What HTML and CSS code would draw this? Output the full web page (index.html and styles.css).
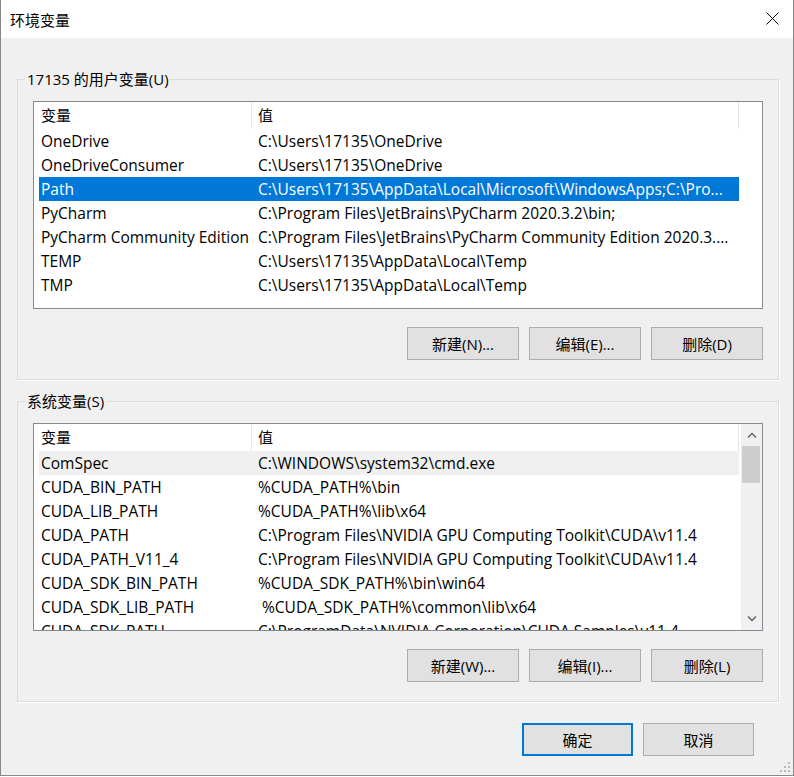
FILE: index.html
```html
<!DOCTYPE html>
<html lang="zh-CN">
<head>
    <meta charset="UTF-8">
    <title>环境变量</title>
    <link rel="stylesheet" href="styles.css">
</head>
<body>
    <div class="window">
        <div class="titlebar">
            <span class="title">环境变量</span>
            <svg class="close" width="13" height="13" viewBox="0 0 13 13">
                <path d="M0.5 0.5 L12.5 12.5 M12.5 0.5 L0.5 12.5" stroke="#000" stroke-width="1" fill="none"/>
            </svg>
        </div>

        <div class="content">
            <fieldset class="group">
                <legend>17135 的用户变量(U)</legend>
                <div class="list">
                    <div class="list-main">
                        <div class="list-head">
                            <div class="head-name">变量</div>
                            <div class="head-value">值</div>
                        </div>
                        <div class="row"><div class="cell name">OneDrive</div><div class="cell value">C:\Users\17135\OneDrive</div></div>
                        <div class="row"><div class="cell name">OneDriveConsumer</div><div class="cell value">C:\Users\17135\OneDrive</div></div>
                        <div class="row selected"><div class="cell name">Path</div><div class="cell value">C:\Users\17135\AppData\Local\Microsoft\WindowsApps;C:\Pro...</div></div>
                        <div class="row"><div class="cell name">PyCharm</div><div class="cell value">C:\Program Files\JetBrains\PyCharm 2020.3.2\bin;</div></div>
                        <div class="row"><div class="cell name">PyCharm Community Edition</div><div class="cell value">C:\Program Files\JetBrains\PyCharm Community Edition 2020.3....</div></div>
                        <div class="row"><div class="cell name">TEMP</div><div class="cell value">C:\Users\17135\AppData\Local\Temp</div></div>
                        <div class="row"><div class="cell name">TMP</div><div class="cell value">C:\Users\17135\AppData\Local\Temp</div></div>
                    </div>
                </div>
                <div class="buttons">
                    <button>新建(N)...</button>
                    <button>编辑(E)...</button>
                    <button>删除(D)</button>
                </div>
            </fieldset>

            <fieldset class="group second">
                <legend>系统变量(S)</legend>
                <div class="list">
                    <div class="list-main">
                        <div class="list-head">
                            <div class="head-name">变量</div>
                            <div class="head-value">值</div>
                        </div>
                        <div class="row hover"><div class="cell name">ComSpec</div><div class="cell value">C:\WINDOWS\system32\cmd.exe</div></div>
                        <div class="row"><div class="cell name">CUDA_BIN_PATH</div><div class="cell value">%CUDA_PATH%\bin</div></div>
                        <div class="row"><div class="cell name">CUDA_LIB_PATH</div><div class="cell value">%CUDA_PATH%\lib\x64</div></div>
                        <div class="row"><div class="cell name">CUDA_PATH</div><div class="cell value">C:\Program Files\NVIDIA GPU Computing Toolkit\CUDA\v11.4</div></div>
                        <div class="row"><div class="cell name">CUDA_PATH_V11_4</div><div class="cell value">C:\Program Files\NVIDIA GPU Computing Toolkit\CUDA\v11.4</div></div>
                        <div class="row"><div class="cell name">CUDA_SDK_BIN_PATH</div><div class="cell value">%CUDA_SDK_PATH%\bin\win64</div></div>
                        <div class="row"><div class="cell name">CUDA_SDK_LIB_PATH</div><div class="cell value"> %CUDA_SDK_PATH%\common\lib\x64</div></div>
                        <div class="row"><div class="cell name">CUDA_SDK_PATH</div><div class="cell value">C:\ProgramData\NVIDIA Corporation\CUDA Samples\v11.4</div></div>
                    </div>
                    <div class="scrollbar">
                        <div class="arrow">
                            <svg width="10" height="6" viewBox="0 0 10 6"><path d="M1 5.5 L5 1.5 L9 5.5" stroke="#606060" stroke-width="1.3" fill="none"/></svg>
                        </div>
                        <div class="track"><div class="thumb"></div></div>
                        <div class="arrow">
                            <svg width="10" height="6" viewBox="0 0 10 6"><path d="M1 0.5 L5 4.5 L9 0.5" stroke="#606060" stroke-width="1.3" fill="none"/></svg>
                        </div>
                    </div>
                </div>
                <div class="buttons">
                    <button>新建(W)...</button>
                    <button>编辑(I)...</button>
                    <button>删除(L)</button>
                </div>
            </fieldset>

            <div class="dialog-buttons">
                <button class="default">确定</button>
                <button>取消</button>
            </div>
        </div>

        <svg class="grip" width="12" height="12" viewBox="0 0 12 12">
            <rect x="9" y="1" width="2" height="2" fill="#b8b8b8"/>
            <rect x="5" y="5" width="2" height="2" fill="#b8b8b8"/>
            <rect x="9" y="5" width="2" height="2" fill="#b8b8b8"/>
            <rect x="1" y="9" width="2" height="2" fill="#b8b8b8"/>
            <rect x="5" y="9" width="2" height="2" fill="#b8b8b8"/>
            <rect x="9" y="9" width="2" height="2" fill="#b8b8b8"/>
        </svg>
    </div>
</body>
</html>
```

FILE: styles.css
```css
body {
    margin: 0;
    background-color: #ffffff;
    font-family: 'Open Sans', 'Noto Sans CJK SC', sans-serif;
    font-size: 15px;
    color: #000000;
}
.window {
    position: relative;
    width: 794px;
    height: 776px;
    box-sizing: border-box;
    background-color: #f0f0f0;
    border: 1px solid #888888;
    border-top: none;
}
.titlebar {
    height: 38px;
    background-color: #ffffff;
    display: flex;
    align-items: center;
    justify-content: space-between;
    padding: 0 14px 0 9px;
}
.title {
    font-size: 15px;
}
.close {
    display: block;
    margin-top: -1px;
}
.content {
    padding: 31px 14px 0 16px;
}
.group {
    margin: 0;
    padding: 12px 15px 19px 5px;
    border: 1px solid #dcdcdc;
    box-shadow: 1px 1px 0 #ffffff;
    min-width: 0;
}
.group.second {
    margin-top: 11px;
}
.group legend {
    padding: 0 2px;
    margin-left: 2px;
    line-height: 20px;
    font-size: 15px;
}
.list {
    height: 208px;
    margin-left: 10px;
    box-sizing: border-box;
    border: 1px solid #828790;
    background-color: #ffffff;
    display: flex;
    overflow: hidden;
}
.list-main {
    flex: 1;
    overflow: hidden;
}
.list-head {
    display: flex;
    height: 27px;
    line-height: 27px;
    font-size: 15px;
}
.head-name {
    width: 210px;
    padding-left: 7px;
    border-right: 1px solid #e5e5e5;
}
.head-value {
    width: 480px;
    padding-left: 6px;
    border-right: 1px solid #e5e5e5;
}
.row {
    display: flex;
    width: 700px;
    height: 24px;
    line-height: 24px;
    margin-left: 5px;
    font-size: 15.5px;
    white-space: pre;
    overflow: hidden;
}
.row.selected {
    background-color: #0078d7;
    color: #ffffff;
}
.row.hover {
    background-color: #f0f0f0;
}
.cell.name {
    width: 211px;
    padding-left: 2px;
    flex-shrink: 0;
    overflow: hidden;
}
.cell.value {
    padding-left: 6px;
    overflow: hidden;
}
.scrollbar {
    width: 21px;
    background-color: #f0f0f0;
    display: flex;
    flex-direction: column;
}
.arrow {
    height: 22px;
    display: flex;
    align-items: center;
    justify-content: center;
}
.track {
    flex: 1;
    padding: 0 2px 0 1px;
}
.thumb {
    height: 37px;
    background-color: #cdcdcd;
}
.buttons {
    display: flex;
    justify-content: flex-end;
    gap: 10px;
    margin-top: 18px;
    margin-left: 10px;
}
button {
    width: 112px;
    height: 33px;
    padding: 0;
    font-family: 'Open Sans', 'Noto Sans CJK SC', sans-serif;
    font-size: 15px;
    color: #000000;
    background-color: #e1e1e1;
    border: 1px solid #adadad;
}
.dialog-buttons {
    display: flex;
    justify-content: flex-end;
    gap: 10px;
    margin-top: 21px;
    padding-right: 25px;
}
.dialog-buttons button {
    width: 111px;
}
.dialog-buttons button.default {
    border: 2px solid #0078d7;
}
.grip {
    position: absolute;
    right: 2px;
    bottom: 2px;
}
```
